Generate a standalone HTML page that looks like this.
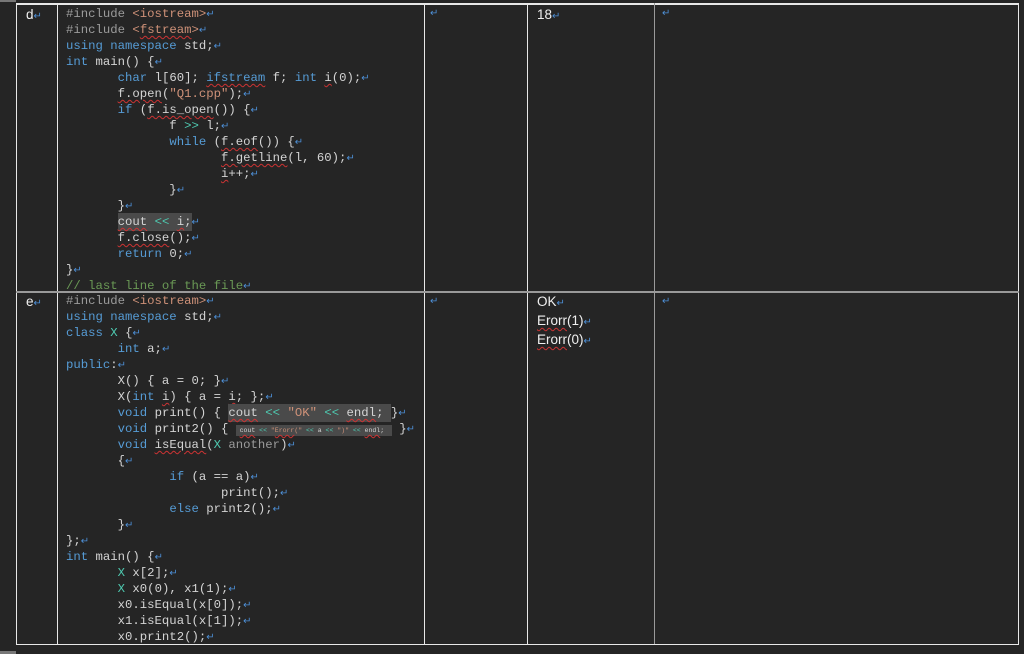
<!DOCTYPE html>
<html><head><meta charset="utf-8"><style>
*{margin:0;padding:0;box-sizing:border-box}
html,body{width:1024px;height:654px;overflow:hidden}
body{background:#252525;position:relative;font-family:"Liberation Mono",monospace;font-size:12.3px;color:#d4d4d4}
.l{position:absolute;background:#e8e8e8}
.g{background:#9a9a9a}
.c{position:absolute;white-space:pre;line-height:16px}
.c span{line-height:0}
.k{color:#569cd6}.s{color:#ce9178}.p{color:#9b9b9b}.cm{color:#6a9955}.o{color:#4ec9b0}.t{color:#4ec9b0}
.r{color:#4d8fd6;font-family:"DejaVu Sans",sans-serif;font-size:10px}
.hl{background:#4a4a4a;padding:2px 0}
.sm{font-size:6.5px}
.txt{position:absolute;font-family:"Liberation Sans",sans-serif;font-size:13.5px;color:#f0f0f0;line-height:19px;white-space:pre}
.txt span{line-height:0}
.w{text-decoration:underline wavy #c33;text-decoration-thickness:1px;text-underline-offset:2px}
</style></head><body>
<div class="l" style="left:0;top:0;width:16px;height:2px;background:#777"></div>
<div class="l" style="left:0;top:651px;width:16px;height:3px;background:#777"></div>
<div class="l" style="left:16px;top:3px;width:1003px;height:2px"></div>
<div class="l" style="left:16px;top:3px;width:1px;height:642px"></div>
<div class="l" style="left:57px;top:3px;width:1px;height:642px"></div>
<div class="l" style="left:424px;top:3px;width:1px;height:642px"></div>
<div class="l" style="left:527px;top:3px;width:1px;height:642px"></div>
<div class="l g" style="left:654px;top:3px;width:1px;height:642px"></div>
<div class="l" style="left:1018px;top:3px;width:1px;height:642px"></div>
<div class="l g" style="left:16px;top:291px;width:1003px;height:2px"></div>
<div class="l" style="left:16px;top:644px;width:1003px;height:1px"></div>

<div class="txt" style="left:26px;top:5px">d<span class="r">↵</span></div>
<div class="txt" style="left:26px;top:292px">e<span class="r">↵</span></div>
<div class="r" style="position:absolute;left:430px;top:8px">↵</div>
<div class="r" style="position:absolute;left:430px;top:296px">↵</div>
<div class="r" style="position:absolute;left:662px;top:8px">↵</div>
<div class="r" style="position:absolute;left:662px;top:296px">↵</div>
<div class="txt" style="left:537px;top:5px">18<span class="r">↵</span></div>
<div class="txt" style="left:537px;top:292px">OK<span class="r">↵</span></div>
<div class="txt" style="left:537px;top:311px"><span class="w">Erorr</span>(1)<span class="r">↵</span></div>
<div class="txt" style="left:537px;top:330px"><span class="w">Erorr</span>(0)<span class="r">↵</span></div>

<div class="c" style="left:66px;top:6px"><span class="p">#include </span><span class="s">&lt;iostream&gt;</span><span class="r">↵</span>
<span class="p">#include </span><span class="s">&lt;<span class="w">fstream</span>&gt;</span><span class="r">↵</span>
<span class="k">using namespace</span> std;<span class="r">↵</span>
<span class="k">int</span> main() {<span class="r">↵</span>
       <span class="k">char</span> l[60]; <span class="k w">ifstream</span> f; <span class="k">int</span> <span class="w">i</span>(0);<span class="r">↵</span>
       <span class="w">f.open</span>(<span class="s">"Q1.cpp"</span>);<span class="r">↵</span>
       <span class="k">if</span> (<span class="w">f.is_open</span>()) {<span class="r">↵</span>
              f <span class="o">&gt;&gt;</span> l;<span class="r">↵</span>
              <span class="k">while</span> (<span class="w">f.eof</span>()) {<span class="r">↵</span>
                     <span class="w">f.getline</span>(l, 60);<span class="r">↵</span>
                     <span class="w">i</span>++;<span class="r">↵</span>
              }<span class="r">↵</span>
       }<span class="r">↵</span>
       <span class="hl"><span class="w">cout</span> <span class="o">&lt;&lt;</span> <span class="w">i</span>;</span><span class="r">↵</span>
       <span class="w">f.close</span>();<span class="r">↵</span>
       <span class="k">return</span> 0;<span class="r">↵</span>
}<span class="r">↵</span>
<span class="cm">// last line of the file</span><span class="r">↵</span></div>

<div class="c" style="left:66px;top:293px"><span class="p">#include </span><span class="s">&lt;iostream&gt;</span><span class="r">↵</span>
<span class="k">using namespace</span> std;<span class="r">↵</span>
<span class="k">class</span> <span class="t">X</span> {<span class="r">↵</span>
       <span class="k">int</span> a;<span class="r">↵</span>
<span class="k">public</span>:<span class="r">↵</span>
       X() { a = 0; }<span class="r">↵</span>
       X(<span class="k">int</span> <span class="w">i</span>) { a = <span class="w">i</span>; };<span class="r">↵</span>
       <span class="k">void</span> print() { <span class="hl"><span class="w">cout</span> <span class="o">&lt;&lt;</span> <span class="s">"OK"</span> <span class="o">&lt;&lt;</span> <span class="w">endl</span>; </span>}<span class="r">↵</span>
       <span class="k">void</span> print2() { <span class="hl sm"> <span class="w">cout</span> <span class="o">&lt;&lt;</span> <span class="s">"<span class="w">Erorr</span>("</span> <span class="o">&lt;&lt;</span> a <span class="o">&lt;&lt;</span> <span class="s">")"</span> <span class="o">&lt;&lt;</span> <span class="w">endl</span>;  </span> }<span class="r">↵</span>
       <span class="k">void</span> <span class="w">isEqual</span>(<span class="t">X</span> <span style="color:#9b9b9b">another</span>)<span class="r">↵</span>
       {<span class="r">↵</span>
              <span class="k">if</span> (a == a)<span class="r">↵</span>
                     print();<span class="r">↵</span>
              <span class="k">else</span> print2();<span class="r">↵</span>
       }<span class="r">↵</span>
};<span class="r">↵</span>
<span class="k">int</span> main() {<span class="r">↵</span>
       <span class="t">X</span> x[2];<span class="r">↵</span>
       <span class="t">X</span> x0(0), x1(1);<span class="r">↵</span>
       x0.isEqual(x[0]);<span class="r">↵</span>
       x1.isEqual(x[1]);<span class="r">↵</span>
       x0.print2();<span class="r">↵</span></div>
</body></html>
